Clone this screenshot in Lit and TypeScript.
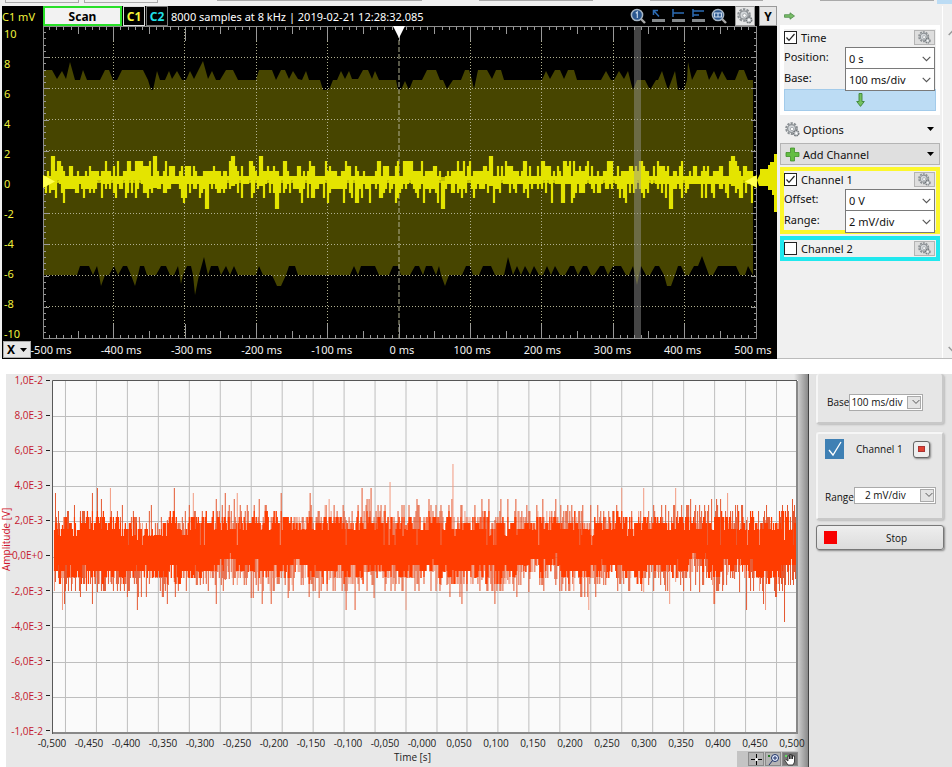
import { LitElement, html, css } from "lit";
import { customElement, property } from "lit/decorators.js";

/** Small repeatable noise source for the traces. */
const noise = (seed: number) => () => {
  seed = (seed * 1664525 + 1013904223) >>> 0;
  return seed / 4294967296;
};

const chevron = html`<svg class="chev" width="9" height="6" viewBox="0 0 9 6" aria-hidden="true"><path d="M.7 .8 4.5 4.6 8.3 .8" fill="none" stroke="#555" stroke-width="1.1"/></svg>`;
const triangle = html`<svg width="7" height="4" viewBox="0 0 7 4" aria-hidden="true"><path d="M0 0H7L3.5 4Z" fill="#000"/></svg>`;
const gear = (size: number) => html`<svg width=${size} height=${size} viewBox="0 0 16 16" aria-hidden="true">
  <circle cx="7" cy="7" r="5.8" fill="none" stroke="#8b9094" stroke-width="2" stroke-dasharray="2.4 1.25"/>
  <circle cx="7" cy="7" r="4.2" fill="#d3d7da" stroke="#8b9094" stroke-width="1.3"/>
  <circle cx="7.5" cy="7.5" r="1.8" fill="#fff" stroke="#8b9094" stroke-width=".7"/>
  <circle cx="12" cy="12" r="2.8" fill="#c9cdd0" stroke="#6f7478" stroke-width="1.4" stroke-dasharray="1.7 .7"/>
  <circle cx="12" cy="12" r="1" fill="#fff"/>
</svg>`;

const shared = css`
  * { box-sizing: border-box; }
  button, select, input { font: inherit; color: inherit; margin: 0; padding: 0; border-radius: 0; }
  button { display: flex; align-items: center; justify-content: center; }
  svg { display: block; flex: none; }
  .combo { display: grid; align-items: center; }
  .combo > * { grid-area: 1 / 1; }
  .combo select { appearance: none; width: 100%; height: 100%; background: #fff; border: 1px solid #7a7a7a; outline: 0; }
  .combo .chev { justify-self: end; margin-right: 4px; pointer-events: none; }
  .xaxis { display: flex; justify-content: space-between; align-items: center; }
  .xaxis span { width: 0; display: flex; justify-content: center; white-space: nowrap; }
  .yaxis { display: flex; flex-direction: column; justify-content: space-between; }
  .yaxis span { height: 0; display: flex; align-items: center; white-space: nowrap; }
`;

const upper = "43,70 52,70 57,79 62,71 66,79 70,62 75,80 80,80 83,70 87,80 100,80 105,70 109,70 113,80 117,80 122,70 143,70 148,80 151,90 153,90 157,71 160,80 165,80 169,71 172,79 177,71 182,80 186,80 190,71 194,79 203,61 208,79 212,71 216,80 220,80 226,70 233,70 238,80 256,80 259,70 272,70 276,80 281,70 285,70 289,79 293,71 298,79 302,80 306,71 309,80 320,80 323,90 329,90 333,80 337,80 341,71 345,79 349,71 352,79 358,79 363,70 368,70 372,79 375,71 379,80 396,80 398,90 401,90 405,81 409,90 413,80 422,80 427,70 436,70 440,80 443,80 447,89 453,80 461,80 465,70 469,70 472,80 474,89 478,70 487,70 492,79 496,70 501,70 504,80 542,80 546,71 550,79 555,70 560,70 564,79 568,70 574,70 577,80 601,80 606,71 611,80 614,80 619,71 624,79 628,71 631,83 633,90 637,80 645,80 650,90 656,80 658,80 662,71 668,90 675,71 678,90 684,90 687,80 688,62 692,80 697,70 706,70 709,80 714,71 718,80 722,71 727,80 735,80 739,70 744,70 748,80 753,80";
const lower = "43,275 77,275 80,266 89,266 93,275 97,266 99,275 101,286 105,275 109,275 114,266 118,275 123,266 127,266 131,275 135,286 138,275 140,266 144,266 147,275 156,275 161,266 166,266 170,275 174,275 178,266 181,284 183,275 187,266 191,266 193,275 195,295 199,275 204,257 208,275 211,266 218,266 221,275 226,266 230,275 234,266 238,275 256,275 259,266 263,275 272,275 277,286 281,286 286,275 289,266 295,266 298,275 350,275 354,266 358,275 361,266 375,266 379,275 389,275 393,266 398,266 401,275 410,275 415,266 419,266 423,275 426,266 432,266 436,275 439,266 441,275 445,286 449,275 462,275 466,266 470,266 473,275 479,275 483,266 491,266 495,275 504,275 508,257 513,275 517,266 521,275 525,266 530,275 534,266 539,275 543,275 547,266 551,275 555,266 560,275 565,275 570,266 574,266 578,275 583,266 587,266 591,275 594,275 600,266 604,266 608,275 613,266 621,266 626,275 629,275 633,266 637,285 641,266 646,275 650,275 655,266 659,266 664,275 667,286 671,286 675,275 678,266 681,266 685,275 689,275 694,266 698,266 702,256 709,275 713,275 718,266 736,266 740,275 745,275 748,266 753,275";

@customElement("scope-view")
class ScopeView extends LitElement {
  static styles = [shared, css`
    :host { display: grid; grid-template-columns: 41px 1fr; grid-template-rows: 20px 1fr 19px; background: #000; color: #fff; margin-left: 2px; }
    .unit { color: #f4f43c; align-self: center; white-space: nowrap; }
    .bar { display: flex; align-items: stretch; gap: 1px; }
    .scan { width: 79px; border: 2px solid #28e028; background: #f2f2f2; color: #000; font-weight: bold; font-size: 12px; }
    .ch { width: 22px; border: 1px solid #777; background: #000; font-weight: bold; font-size: 12px; }
    .c1 { color: #f6f63a; border-color: #ddd; }
    .c2 { color: #20dfe6; }
    .info { align-self: center; white-space: nowrap; flex: 1; padding-left: 2px; }
    .tools { display: flex; align-items: center; gap: 5px; margin-right: 7px; }
    .sq { width: 20px; border: 1px solid #999; background: #e6e6e6; color: #000; font-weight: bold; font-size: 12px; }
    .y { width: 18px; margin-left: 3px; }
    .levels { color: #f0f03c; padding: 7px 3px 7px 2px; }
    .plot { width: 100%; height: 100%; min-height: 0; }
    .foot { grid-column: 1 / -1; display: flex; align-items: center; color: #f2f2f2; }
    .x { width: 28px; height: 17px; margin-left: 1px; background: #e6e6e6; border: 1px solid #aaa; color: #000; font-weight: bold; font-size: 12px; gap: 5px; }
    .foot .xaxis { flex: 1; margin: 0 24px 0 20px; }
  `];

  private trace() {
    const r = noise(77);
    const spikes: Record<number, [number, number]> = { 53: [156, 190], 155: [156, 188], 207: [171, 209], 233: [156, 186], 261: [156, 186], 277: [171, 209], 443: [181, 209], 491: [156, 186], 671: [176, 209], 733: [156, 186] };
    let d = "";
    let top = 171, bottom = 186;
    for (let x = 44; x < 756; x += 2) {
      const hi = r(), lo = r();
      if (r() > 0.25) top = hi > 0.86 ? 161 : hi > 0.62 ? 166 : hi > 0.3 ? 171 : 176;
      bottom = lo > 0.96 ? 203 : lo > 0.86 ? 198 : lo > 0.68 ? 193 : lo > 0.42 ? 189 : lo > 0.14 ? 184 : 180;
      let [a, b] = [top, bottom];
      const s = spikes[x + 1] ?? spikes[x - 1];
      if (s) [a, b] = s;
      d += `M${x} ${a}V${b}`;
    }
    return d;
  }

  render() {
    const vs = [113, 184, 256, 327, 470, 541, 613, 684];
    const hs = [57, 88, 119, 150, 181, 213, 244, 275, 306];
    let ticks = "";
    for (let i = 1; i < 100; i++) {
      const x = Math.round(43 + i * 7.135), l = i % 10 === 0 ? 15 : i % 5 === 0 ? 8 : 4;
      ticks += `M${x - 0.5} 26v${l}M${x - 0.5} 339v-${l}`;
    }
    for (let i = 1; i < 50; i++) {
      const y = Math.round(26 + i * 6.24), l = i % 5 === 0 ? 6 : 3;
      ticks += `M43 ${y + 0.5}h${l}M757 ${y + 0.5}h-${l}`;
    }
    return html`
      <span class="unit">C1 mV</span>
      <div class="bar">
        <button class="scan">Scan</button>
        <button class="ch c1">C1</button>
        <button class="ch c2">C2</button>
        <span class="info">8000 samples at 8 kHz | 2019-02-21 12:28:32.085</span>
        <div class="tools">
          ${[1, 2, 3, 4, 5].map((n) => n === 1 || n === 5
            ? html`<svg width="16" height="16" viewBox="0 0 16 16"><path d="M11 11 15 15" stroke="#aaa" stroke-width="2.4"/><circle cx="7" cy="7" r="5.6" fill="#2b578f" stroke="#a9b7c4" stroke-width="1.5"/><path d=${n === 1 ? "M5.8 5.2 7.3 4V10" : "M3.6 5H10.4V9H3.600ZM7 5V9"} fill="none" stroke="#cfe0f2" stroke-width="1.1"/></svg>`
            : html`<svg width="15" height="16" viewBox="0 0 15 16"><path d="M1 12.500H14" stroke="#85898c" stroke-width="3"/><path d=${n === 2 ? "M8 8.500 3 3M2.500 7V2.500H7" : n === 3 ? "M2 1V9M2 5H13" : "M2 1V9M2 3H13M2 7H8"} fill="none" stroke="#2d6cb4" stroke-width="1.5"/></svg>`)}
        </div>
        <button class="sq" aria-label="Settings">${gear(16)}</button>
        <button class="sq y">Y</button>
      </div>
      <div class="levels yaxis">${[10, 8, 6, 4, 2, 0, -2, -4, -6, -8, -10].map((v) => html`<span>${v}</span>`)}</div>
      <svg class="plot" viewBox="43 26 734 314" preserveAspectRatio="none">
        <polygon points="${upper} ${lower.split(" ").reverse().join(" ")}" fill="#474500"/>
        <path d="${vs.map((x) => `M${x}.5 26V339`).join("")}${hs.map((y) => `M43 ${y}.5H757`).join("")}" stroke="#b0b090" stroke-width="1" stroke-dasharray="1 2" fill="none"/>
        <path d="M399 26V339" stroke="#b0b090" stroke-dasharray="5 2"/>
        <path d=${ticks} stroke="#999" fill="none"/>
        <path d="M43 26.5H757M43.5 26V339M756.5 26V339M43 338.5H757" stroke="#8c8c8c"/>
        <path d=${this.trace()} stroke="#e4e400" stroke-width="2.2" fill="none"/>
        <path d="M43 177H755V183H43Z" fill="#e4e400" opacity=".8"/>
        <rect x="634" y="26" width="7" height="313" fill="#999" opacity=".45"/>
        <path d="M43 175 55 181.500 43 188Z" fill="#ffff50"/>
        <path d="M757 175 745 181.500 757 188Z" fill="#ffff50"/>
        <path d="M757 180 760 174V169H768V165H770V162H774V154H777V212H774V195H772V190H768V186H759Z" fill="#e6e600"/>
        <path d="M393 26H405L399 38Z" fill="#fff"/>
      </svg>
      <div class="foot">
        <button class="x">X ${triangle}</button>
        <div class="xaxis">${[-500, -400, -300, -200, -100, 0, 100, 200, 300, 400, 500].map((v) => html`<span>${v} ms</span>`)}</div>
      </div>`;
  }
}

@customElement("channel-box")
class ChannelBox extends LitElement {
  @property() name = "";
  @property({ type: Boolean }) on = false;
  @property({ attribute: false }) fields: [string, string][] = [];
  static styles = [shared, css`
    :host { display: block; background: #f0f0f0; border: 4px solid #fff; }
    .head { display: flex; align-items: center; justify-content: space-between; height: 17px; padding-right: 1px; }
    .head label { display: flex; align-items: center; gap: 4px; }
    input { appearance: none; width: 13px; height: 13px; border: 1px solid #222; background: #fff; }
    .tick { display: grid; }
    .tick > * { grid-area: 1 / 1; }
    .tick svg { pointer-events: none; }
    .gear { width: 21px; height: 15px; background: #dedede; border: 1px solid #b4b4b4; }
    .row { display: grid; grid-template-columns: 1fr 91px; height: 21px; line-height: 21px; }
    .combo { height: 20px; margin-top: 1px; padding-right: 1px; }
    .combo select { padding-left: 3px; }
  `];
  render() {
    return html`
      <div class="head">
        <label><span class="tick"><input type="checkbox" .checked=${this.on}>${this.on ? html`<svg width="13" height="13" viewBox="0 0 13 13"><path d="M2.500 6.500 5 9.300 10.500 3" fill="none" stroke="#222" stroke-width="1.2"/></svg>` : ""}</span>${this.name}</label>
        <button class="gear" aria-label="${this.name} settings">${gear(13)}</button>
      </div>
      ${this.fields.map(([label, value], i) => html`<div class="row"><label for="f${i}">${label}</label><span class="combo"><select id="f${i}"><option>${value}</option></select>${chevron}</span></div>`)}
      <slot></slot>`;
  }
}

@customElement("side-panel")
class SidePanel extends LitElement {
  static styles = [shared, css`
    :host { display: grid; grid-template-columns: 1fr 10px; background: #f0f0f0; color: #111; border-bottom: 1px solid #bbb; }
    .main { padding: 0 2px 0 3px; }
    .top { height: 19px; padding: 6px 4px 0; }
    .hint { width: 100%; height: 22px; margin-top: 1px; background: #bcdcf4; border: 1px solid #a3cbea; }
    .menu { width: 100%; height: 22px; justify-content: flex-start; gap: 3px; padding: 0 5px 0 4px; border: 1px solid transparent; background: none; }
    .menu span { flex: 1; text-align: left; }
    .options { margin-top: 3px; }
    .add { background: #dfdfdf; border-color: #b4b4b4; margin: 3px 0 2px; }
    .one { border-color: #fcf72c; margin-bottom: 2px; }
    .two { border-color: #20e8ee; }
    .scroll { display: flex; flex-direction: column; justify-content: space-between; padding: 24px 0 6px 5px; border-left: 1px solid #fff; overflow: hidden; }
  `];
  render() {
    return html`
      <div class="main">
        <div class="top"><svg width="11" height="8" viewBox="0 0 11 8"><path d="M.5 2.700H6V.8L10.500 4 6 7.200V5.300H.5Z" fill="#79bd68" stroke="#4c8c47" stroke-width=".8"/></svg></div>
        <channel-box name="Time" on .fields=${[["Position:", "0 s"], ["Base:", "100 ms/div"]]}>
          <button class="hint" aria-label="Expand"><svg width="9" height="14" viewBox="0 0 9 14"><path d="M3 .5H6V8.500H8.300L4.500 13.400 .7 8.500H3Z" fill="#74c160" stroke="#3c8439" stroke-width=".9"/></svg></button>
        </channel-box>
        <button class="menu options">${gear(15)}<span>Options</span>${triangle}</button>
        <button class="menu add"><svg width="15" height="15" viewBox="0 0 15 15"><path d="M5.500 1H9.500V5.500H14V9.500H9.500V14H5.500V9.500H1V5.500H5.500Z" fill="#63bd42" stroke="#3f9128" stroke-width=".8"/></svg><span>Add Channel</span>${triangle}</button>
        <channel-box class="one" name="Channel 1" on .fields=${[["Offset:", "0 V"], ["Range:", "2 mV/div"]]}></channel-box>
        <channel-box class="two" name="Channel 2"></channel-box>
      </div>
      <div class="scroll">
        <svg width="9" height="6" viewBox="0 0 9 6"><path d="M.7 5 4.500 1 8.300 5" fill="none" stroke="#999" stroke-width="1.500"/></svg>
        <svg width="9" height="6" viewBox="0 0 9 6"><path d="M.7 1 4.500 5 8.300 1" fill="none" stroke="#999" stroke-width="1.500"/></svg>
      </div>`;
  }
}

@customElement("amplitude-graph")
class AmplitudeGraph extends LitElement {
  static styles = [shared, css`
    :host { display: grid; grid-template-columns: 12px 31px 9px 1fr 10px; grid-template-rows: 6px minmax(0, 1fr) 17px 16px; background: linear-gradient(to right, #fff 6px, #e8e8e8 6px, #e8e8e8 calc(100% - 14px), #8a8a8a); border-right: 1px solid #444; color: #222; }
    .title { grid-area: 2 / 1; writing-mode: vertical-rl; transform: rotate(180deg); color: #d0142c; text-align: center; line-height: 12px; padding-top: 36px; white-space: nowrap; }
    .yaxis { grid-area: 2 / 2; color: #c4182e; padding-bottom: 3px; }
    .yaxis span { justify-content: flex-end; }
    .marks { grid-area: 2 / 3; }
    .marks i { width: 4px; height: 1px; margin-right: 2px; background: #222; }
    .plot { grid-area: 2 / 4; width: 100%; height: 100%; }
    .xaxis { grid-area: 3 / 4; margin-right: 6px; }
    .foot { grid-area: 4 / 1 / auto / -1; display: grid; grid-template-columns: 1fr 62px; margin-right: 9px; }
    .foot > span { text-align: center; line-height: 12px; padding-left: 88px; }
    .palette { display: flex; align-items: center; gap: 1px; background: #c4c4c4; padding-left: 11px; }
    .palette button { width: 16px; height: 14px; background: #b4b4b4; border: 1px solid #8a8a8a; }
    .palette .active { background: #777; }
  `];

  render() {
    const r = noise(2024);
    const spikes: Record<number, [number, number]> = {
      55: [493, 582], 62: [525, 610], 92: [493, 604], 97: [488, 592], 110: [488, 582], 137: [540, 610], 167: [520, 604], 174: [488, 582],
      193: [493, 575], 216: [499, 604], 225: [493, 580], 237: [493, 585], 262: [525, 604], 281: [493, 578], 310: [493, 580], 329: [499, 580],
      346: [520, 610], 355: [530, 610], 362: [488, 580], 371: [488, 575], 390: [482, 578], 406: [525, 610], 453: [464, 570], 482: [499, 580],
      508: [499, 580], 516: [499, 575], 543: [499, 585], 495: [520, 604], 589: [530, 610], 622: [488, 580], 644: [488, 592], 676: [488, 582],
      670: [530, 604], 714: [530, 604], 712: [499, 580], 728: [493, 575], 747: [520, 610], 766: [520, 610], 785: [540, 622], 793: [499, 580],
    };
    let dark = "", pale = "", core = "";
    let drift = 0, coreTop = 524, coreBottom = 574;
    for (let x = 54; x < 797; x++) {
      const a = r(), b = r(), c = r();
      if (x % 7 === 0) drift = Math.round((drift * 0.6 + (r() - 0.5) * 14) / 6) * 6;
      let top = a > 0.97 ? 499 : a > 0.87 ? 505 : a > 0.7 ? 511 : a > 0.42 ? 517 : a > 0.12 ? 523 : 530;
      let bottom = b > 0.97 ? 604 : b > 0.91 ? 597 : b > 0.76 ? 591 : b > 0.5 ? 584 : b > 0.22 ? 578 : 571;
      top += drift > 0 ? drift : 0;
      bottom += drift < 0 ? drift : 0;
      if (c > 0.55) {
        coreTop = c > 0.9 ? 511 : c > 0.75 ? 517 : c > 0.63 ? 523 : 529;
        coreBottom = r() > 0.75 ? 584 : r() > 0.5 ? 577 : r() > 0.3 ? 571 : 565;
      }
      if (spikes[x]) [top, bottom] = spikes[x];
      const d = `M${x}.5 ${top}V${bottom}`;
      if (a + b > 0.9) dark += d; else pale += d;
      const gap = c < 0.03;
      core += `M${x}.5 ${gap ? 545 : Math.max(top, coreTop + Math.max(drift, 0))}V${Math.min(bottom, coreBottom + Math.min(drift, 0))}`;
    }
    let lines = "";
    for (let i = 0; i < 24; i++) lines += `M${Math.round(65 + i * 30.96)}.5 381V734`;
    for (let i = 1; i < 10; i++) lines += `M53 ${Math.round(381 + i * 35.1)}.5H797`;
    const rows = ["1,0E-2", "8,0E-3", "6,0E-3", "4,0E-3", "2,0E-3", "0,0E+0", "-2,0E-3", "-4,0E-3", "-6,0E-3", "-8,0E-3", "-1,0E-2"];
    const cols = Array.from({ length: 21 }, (_, i) => (i < 11 ? "-" : "") + "0," + String(Math.abs(i - 10) * 50).padStart(3, "0"));
    return html`
      <span class="title">Amplitude [V]</span>
      <div class="yaxis">${rows.map((t) => html`<span>${t}</span>`)}</div>
      <div class="yaxis marks">${rows.map(() => html`<span><i></i></span>`)}</div>
      <svg class="plot" viewBox="52 380 747 354" preserveAspectRatio="none">
        <path d="M52 380H799V734H52Z" fill="#fafafa"/>
        <path d=${lines} stroke="#bebebe" fill="none"/>
        <path d=${dark} stroke="#e4572f" fill="none"/>
        <path d=${pale} stroke="#f29a80" fill="none"/>
        <path d=${core} stroke="#ff3c00" stroke-width="1.200" fill="none"/>
        <path d="M52.500 734V380.500H798" stroke="#555" fill="none"/>
        <path d="M798 381V733H53" stroke="#888" stroke-width="2" fill="none"/>
      </svg>
      <div class="xaxis">${cols.map((t) => html`<span>${t}</span>`)}</div>
      <div class="foot"><span>Time [s]</span>
        <div class="palette">
          <button aria-label="Cursor"><svg width="13" height="13" viewBox="0 0 13 13"><path d="M6.500 1V12M1 6.500H12" stroke="#000"/><circle cx="6.500" cy="6.500" r="1.500" fill="#fff"/></svg></button>
          <button aria-label="Zoom"><svg width="13" height="13" viewBox="0 0 13 13"><circle cx="8" cy="5" r="3.500" fill="#e8f0ff" stroke="#1c2f66"/><path d="M5.500 7.500 2 12M6 5H10M8 3V7" stroke="#1c2f66"/><path d="M1 3H3" stroke="#277a27" stroke-width="2"/></svg></button>
          <button class="active" aria-label="Pan"><svg width="13" height="13" viewBox="0 0 13 13"><path d="M4 12 1 7.500 2 6.500 4 8V3H5.500V6V1.500H7V6V2H8.500V6V3H10.500V9L9 12Z" fill="#fff" stroke="#222" stroke-width=".8"/><path d="M1 3H3" stroke="#5fe05f" stroke-width="2"/></svg></button>
        </div>
      </div>`;
  }
}

@customElement("control-panel")
class ControlPanel extends LitElement {
  static styles = [shared, css`
    :host { display: block; background: #e4e4e4; padding: 0 8px 0 7px; color: #111; }
    .card { background: #e6e6e6; border: 2px solid #f6f6f6; border-right-color: #c8c8c8; border-bottom-color: #c8c8c8; border-radius: 3px; box-shadow: 1px 1px 2px #bbb; }
    .line { display: flex; align-items: center; }
    .base { height: 50px; border-top: 0; padding: 8px 0 0 9px; margin-bottom: 8px; }
    .channel { height: 88px; padding: 4px 6px 0 7px; margin-bottom: 5px; }
    .name { height: 22px; padding-right: 6px; }
    .name label { display: flex; align-items: center; gap: 12px; flex: 1; }
    .tick { display: grid; }
    .tick > * { grid-area: 1 / 1; }
    .tick svg { pointer-events: none; }
    input { appearance: none; width: 19px; height: 20px; background: #3f80b4; }
    .dot { width: 17px; height: 17px; border: 1px solid #666; border-radius: 3px; background: #eee; box-shadow: 1px 1px 2px #888; }
    .dot i { width: 7px; height: 6px; border: 1px solid #a33; background: #e04030; }
    .range { margin-top: 26px; }
    .range label { padding-top: 4px; }
    .combo { height: 17px; }
    .combo select { border-color: #aaa; }
    .base .combo { width: 74px; }
    .base select { padding-left: 1px; }
    .range .combo { flex: 1; }
    .range select { padding-left: 10px; }
    .combo .box { justify-self: end; width: 14px; height: 13px; margin-right: 2px; background: #e4e4e4; border: 1px solid #aaa; display: grid; place-items: center; pointer-events: none; }
    .combo .box .chev { margin: 0; width: 8px; }
    .stop { width: 100%; height: 25px; justify-content: flex-start; padding: 0 7px; border: 1px solid #777; border-radius: 3px; background: linear-gradient(#eee, #dcdcdc); box-shadow: 1px 1px 2px #888; }
    .stop i { width: 13px; height: 13px; background: #f80000; }
    .stop span { flex: 1; text-align: center; padding-left: 20px; }
  `];
  render() {
    const combo = (id: string, v: string) => html`<span class="combo"><select id=${id}><option>${v}</option></select><span class="box">${chevron}</span></span>`;
    return html`
      <div class="card line base"><label for="base">Base</label>${combo("base", "100 ms/div")}</div>
      <div class="card channel">
        <div class="line name">
          <label><span class="tick"><input type="checkbox" .checked=${true}><svg width="19" height="20" viewBox="0 0 19 20"><path d="M4 11 8 16 16 3" fill="none" stroke="#fff" stroke-width="1.300"/></svg></span>Channel 1</label>
          <button class="dot" aria-label="Channel 1 colour"><i></i></button>
        </div>
        <div class="line range"><label for="range">Range</label>${combo("range", "2 mV/div")}</div>
      </div>
      <button class="stop"><i></i><span>Stop</span></button>`;
  }
}

@customElement("app-root")
class AppRoot extends LitElement {
  static styles = [shared, css`
    :host { display: grid; grid-template-rows: 6px 352px 16px minmax(0, 1fr); height: 100vh; min-height: 640px; background: #fff; overflow: hidden; }
    .strip { display: flex; background: #f0f0f0; padding-left: 5px; }
    .strip i { height: 3px; border: 1px solid #aaa; border-top: 0; flex: 72; margin-right: 5px; }
    .strip .flat { height: 1px; flex: 112; margin: 0 3px 0 54px; }
    .strip .wide { flex: 204; }
    .strip .edge { flex: 15; margin: 0; height: 4px; border: 0; background: #bcdcf4; }
    .analyzer { display: grid; grid-template-columns: minmax(0, 1fr) 175px; background: #f0f0f0; font: 11px/17px "Noto Sans", sans-serif; }
    .logger { grid-row: 4; display: grid; grid-template-columns: minmax(0, 1fr) 143px; font: 10px/14px "Open Sans", sans-serif; }
  `];
  render() {
    return html`
      <div class="strip"><i></i><i></i><i class="flat wide"></i><i class="flat"></i><i class="flat"></i><i class="flat"></i><i class="edge"></i></div>
      <div class="analyzer"><scope-view></scope-view><side-panel></side-panel></div>
      <div class="logger"><amplitude-graph></amplitude-graph><control-panel></control-panel></div>`;
  }
}
